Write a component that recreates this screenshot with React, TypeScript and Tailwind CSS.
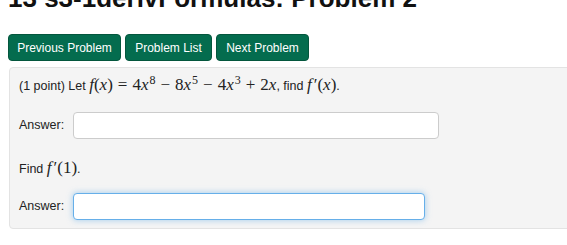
const sans = { fontFamily: '"Liberation Sans", Arial, Helvetica, sans-serif' };

export default function App() {
  return (
    <div className="h-[245px] w-[567px] overflow-hidden bg-white text-[#222]" style={sans}>
      <div className="px-2">
        <h1 className="-mt-[16px] text-[26px] font-bold leading-[29px] text-[#111]">
          13 s3-1derivFormulas: Problem 2
        </h1>
        <div className="mt-[21px] flex gap-[4px]">
          <NavButton label="Previous Problem" width="w-[113px]" />
          <NavButton label="Problem List" width="w-[87px]" />
          <NavButton label="Next Problem" width="w-[93px]" />
        </div>
        <div className="mt-[6px] ml-px w-[620px] rounded border border-[#e3e3e3] bg-[#f4f4f4] px-[9px] pt-[8px] pb-[8px] text-[12.5px]">
          <p className="leading-[18px]">
            (1 point) Let{" "}
            <Math>
              <i>f</i>(<i>x</i>)<Op>=</Op>4<i>x</i><Sup>8</Sup>
              <Op>−</Op>8<i>x</i><Sup>5</Sup>
              <Op>−</Op>4<i>x</i><Sup>3</Sup>
              <Op>+</Op>2<i>x</i>
            </Math>
            , find{" "}
            <Math>
              <i>f</i>
              <span className="ml-[2px]">′</span>(<i>x</i>)
            </Math>
            .
          </p>
          <AnswerRow className="mt-[17px]" inputWidth="w-[366px]" />
          <p className="mt-[20px] leading-[18px]">
            Find{" "}
            <Math>
              <i>f</i>
              <span className="ml-[2px]">′</span>(1)
            </Math>
            .
          </p>
          <AnswerRow className="mt-[15px]" inputWidth="w-[352px]" focused />
        </div>
      </div>
    </div>
  );
}

function NavButton({ label, width }: { label: string; width: string }) {
  return (
    <button
      className={`${width} h-[27px] rounded-[4px] border border-[#04563d] bg-[#046c4e] text-[12px] text-white`}
    >
      {label}
    </button>
  );
}

function Math({ children }: { children: React.ReactNode }) {
  return (
    <span
      className="text-[17px] whitespace-nowrap"
      style={{ fontFamily: '"Liberation Serif", "Times New Roman", serif' }}
    >
      {children}
    </span>
  );
}

function Op({ children }: { children: React.ReactNode }) {
  return <span className="px-[5px]">{children}</span>;
}

function Sup({ children }: { children: React.ReactNode }) {
  return <sup className="ml-[1px] text-[12px]">{children}</sup>;
}

function AnswerRow({
  className,
  inputWidth,
  focused,
}: {
  className?: string;
  inputWidth: string;
  focused?: boolean;
}) {
  return (
    <div className={`flex items-center gap-[9px] ${className ?? ""}`}>
      <span>Answer:</span>
      <input
        type="text"
        className={`${inputWidth} h-[27px] rounded-[4px] border bg-white px-2 text-[13px] outline-none ${
          focused
            ? "border-[#66afe9] shadow-[0_0_6px_rgba(102,175,233,0.6)]"
            : "border-[#cccccc]"
        }`}
      />
    </div>
  );
}
